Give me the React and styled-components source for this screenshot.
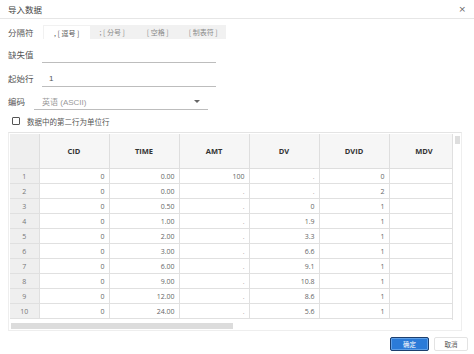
import React, { useState } from "react";
import styled, { createGlobalStyle } from "styled-components";

const GlobalStyle = createGlobalStyle`
  html, body {
    margin: 0;
    padding: 0;
    background: #ffffff;
  }
  body {
    font-family: "Noto Sans CJK SC", "Noto Sans", sans-serif;
    color: #333;
  }
`;

const Dialog = styled.div`
  width: 474px;
  height: 354px;
  display: flex;
  flex-direction: column;
  background: #fff;
  overflow: hidden;
`;

const Header = styled.div`
  height: 18px;
  border-bottom: 1px solid #e6e6e6;
  display: flex;
  align-items: center;
  justify-content: space-between;
  padding: 0 8px 0 8px;
  font-size: 8.5px;
  color: #444;
`;

const Close = styled.span`
  font-family: "DejaVu Sans", sans-serif;
  font-size: 9px;
  color: #666;
  cursor: pointer;
`;

const Form = styled.div`
  display: flex;
  flex-direction: column;
  padding: 5px 0 0 8px;
`;

const Row = styled.div`
  display: flex;
  align-items: ${(p) => (p.$bottom ? "flex-end" : "center")};
  height: ${(p) => p.$h}px;
`;

const Label = styled.div`
  width: ${(p) => p.$w || 34}px;
  flex: none;
  font-size: 8.5px;
  color: #555;
  padding-bottom: ${(p) => (p.$bottom ? 3 : 0)}px;
`;

const Segmented = styled.div`
  display: flex;
  width: 183px;
  height: 14px;
  margin-left: 1px;
  background: #f1f1f1;
`;

const SegItem = styled.div`
  flex: 1;
  display: flex;
  align-items: center;
  justify-content: center;
  font-size: 7px;
  color: ${(p) => (p.$active ? "#555" : "#8a8a8a")};
  background: ${(p) => (p.$active ? "#fff" : "transparent")};
  margin: ${(p) => (p.$active ? "1px 0 0 1px" : "0")};
  cursor: pointer;
  white-space: pre;
`;

const Input = styled.div`
  width: ${(p) => p.$w}px;
  height: 16px;
  border-bottom: 1px solid #bdbdbd;
  display: flex;
  align-items: center;
  justify-content: space-between;
  box-sizing: border-box;
  padding: 0 ${(p) => p.$pr || 0}px 0 ${(p) => p.$pl || 0}px;
  font-size: 8px;
  color: ${(p) => (p.$muted ? "#999" : "#555")};
  font-family: "Liberation Sans", "Noto Sans CJK SC", sans-serif;
`;

const Caret = styled.span`
  width: 0;
  height: 0;
  border-left: 3px solid transparent;
  border-right: 3px solid transparent;
  border-top: 3px solid #666;
`;

const CheckRow = styled.label`
  display: flex;
  align-items: center;
  gap: 7px;
  height: 22px;
  padding-left: 4px;
  font-size: 7.5px;
  color: #555;
`;

const Box = styled.span`
  width: 8px;
  height: 8px;
  border: 1px solid #555;
  border-radius: 1px;
  box-sizing: border-box;
  background: #fff;
`;

const Panel = styled.div`
  margin-left: 8px;
  width: 454px;
  height: 199px;
  box-sizing: border-box;
  border: 1px solid #eeeeee;
  border-top-color: #e4e4e4;
  display: grid;
  grid-template-columns: 443px 8px;
  grid-template-rows: 186px 11px;
  padding-left: 1px;
  padding-top: 1px;
`;

const Viewport = styled.div`
  overflow: hidden;
  border-right: 1px solid #e0e0e0;
`;

const VTrack = styled.div`
  padding: 2px 1px 0 2px;
`;

const VThumb = styled.div`
  height: 8px;
  background: #dedede;
`;

const HTrack = styled.div`
  padding: 3px 0 0 1px;
  grid-column: 1 / span 2;
`;

const HThumb = styled.div`
  width: 222px;
  height: 6px;
  background: #dcdcdc;
`;

const Table = styled.table`
  border-collapse: collapse;
  table-layout: fixed;
  width: 449px;
  font-family: "Open Sans", "Liberation Sans", sans-serif;
`;

const Th = styled.th`
  height: 34px;
  padding: 0;
  border: 1px solid #dedede;
  border-top: none;
  border-left: ${(p) => (p.$corner ? "none" : "1px solid #dedede")};
  background: ${(p) => (p.$corner ? "#efefef" : "#f6f6f6")};
  font-size: 7.5px;
  font-weight: 700;
  color: #333;
  text-align: center;
`;

const Td = styled.td`
  height: 14px;
  padding: 0 4px 0 0;
  border: 1px solid #e0e0e0;
  font-size: 7px;
  line-height: 1;
  color: ${(p) => (p.$dot ? "#aaa" : "#666")};
  text-align: right;
  white-space: nowrap;
`;

const IdxCell = styled.td`
  height: 14px;
  padding: 0;
  border: 1px solid #e0e0e0;
  border-left: none;
  background: #efefef;
  font-size: 7px;
  line-height: 1;
  color: #777;
  text-align: center;
`;

const Footer = styled.div`
  flex: 1;
  display: flex;
  justify-content: flex-end;
  align-items: flex-start;
  gap: 5px;
  padding: 6px 6px 0 0;
`;

const Button = styled.button`
  width: ${(p) => p.$w}px;
  height: 14px;
  box-sizing: border-box;
  padding: 0;
  border-radius: 2px;
  font-family: "Noto Sans CJK SC", sans-serif;
  font-size: 6.5px;
  cursor: pointer;
  border: 1px solid ${(p) => (p.$primary ? "#1d3f6e" : "#e3e3e3")};
  background: ${(p) => (p.$primary ? "#2b7bd8" : "#fff")};
  color: ${(p) => (p.$primary ? "#fff" : "#555")};
  box-shadow: ${(p) => (p.$primary ? "inset 0 0 0 1px #5fa0e8" : "none")};
`;

const columns = ["CID", "TIME", "AMT", "DV", "DVID", "MDV"];

const rows = [
  ["0", "0.00", "100", ".", "0"],
  ["0", "0.00", ".", ".", "2"],
  ["0", "0.50", ".", "0", "1"],
  ["0", "1.00", ".", "1.9", "1"],
  ["0", "2.00", ".", "3.3", "1"],
  ["0", "3.00", ".", "6.6", "1"],
  ["0", "6.00", ".", "9.1", "1"],
  ["0", "9.00", ".", "10.8", "1"],
  ["0", "12.00", ".", "8.6", "1"],
  ["0", "24.00", ".", "5.6", "1"],
];

const separators = [", [ 逗号 ]", "; [ 分号 ]", "[ 空格 ]", "[ 制表符 ]"];

export default function App() {
  const [sep, setSep] = useState(0);

  return (
    <>
      <GlobalStyle />
      <Dialog>
        <Header>
          <span>导入数据</span>
          <Close>×</Close>
        </Header>
        <Form>
          <Row $h={16}>
            <Label>分隔符</Label>
            <Segmented>
              {separators.map((s, i) => (
                <SegItem key={s} $active={sep === i} onClick={() => setSep(i)}>
                  {s}
                </SegItem>
              ))}
            </Segmented>
          </Row>
          <Row $h={23} $bottom>
            <Label $bottom>缺失值</Label>
            <Input $w={174} />
          </Row>
          <Row $h={24} $bottom>
            <Label $bottom>起始行</Label>
            <Input $w={174} $pl={7}>1</Input>
          </Row>
          <Row $h={23} $bottom>
            <Label $bottom $w={26}>编码</Label>
            <Input $w={174} $pl={8} $pr={8} $muted>
              <span>英语 (ASCII)</span>
              <Caret />
            </Input>
          </Row>
          <CheckRow>
            <Box />
            <span>数据中的第二行为单位行</span>
          </CheckRow>
        </Form>
        <Panel>
          <Viewport>
            <Table>
              <colgroup>
                <col style={{ width: 29 }} />
                {columns.map((c) => (
                  <col key={c} style={{ width: 70 }} />
                ))}
              </colgroup>
              <thead>
                <tr>
                  <Th $corner />
                  {columns.map((c) => (
                    <Th key={c}>{c}</Th>
                  ))}
                </tr>
              </thead>
              <tbody>
                {rows.map((r, i) => (
                  <tr key={i}>
                    <IdxCell>{i + 1}</IdxCell>
                    {r.map((v, j) => (
                      <Td key={j} $dot={v === "."}>
                        {v}
                      </Td>
                    ))}
                    <Td />
                  </tr>
                ))}
              </tbody>
            </Table>
          </Viewport>
          <VTrack>
            <VThumb />
          </VTrack>
          <HTrack>
            <HThumb />
          </HTrack>
        </Panel>
        <Footer>
          <Button $primary $w={39}>确定</Button>
          <Button $w={34}>取消</Button>
        </Footer>
      </Dialog>
    </>
  );
}
